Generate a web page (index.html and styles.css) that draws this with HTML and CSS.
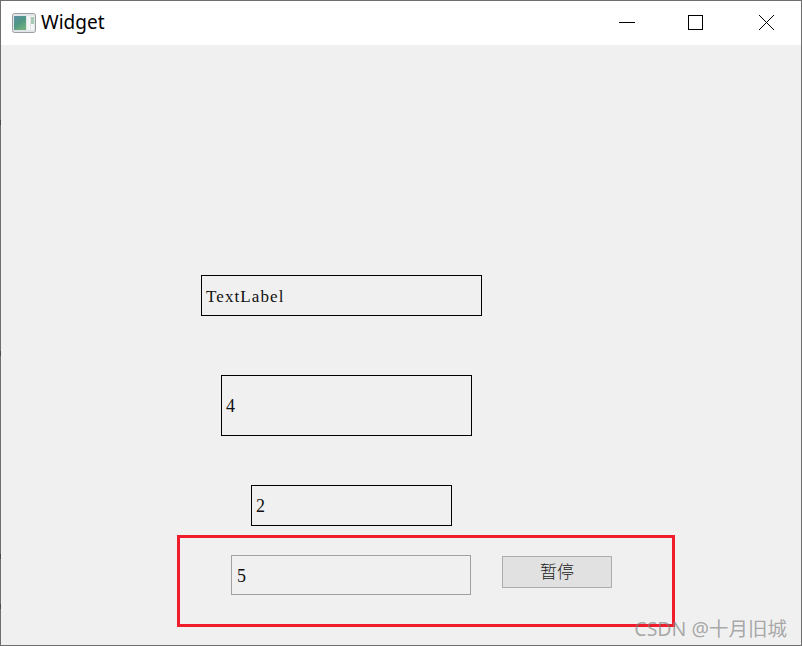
FILE: index.html
```html
<!DOCTYPE html>
<html lang="zh">
<head>
<meta charset="utf-8">
<title>Widget</title>
<link rel="stylesheet" href="styles.css">
</head>
<body>
<div class="window">
  <span class="tick tick-a"></span>
  <span class="tick tick-b"></span>
  <span class="tick tick-c"></span>
  <span class="tick tick-d"></span>
  <header class="titlebar">
    <div class="title-left">
      <svg class="app-icon" width="24" height="20" viewBox="0 0 24 20">
        <defs>
          <linearGradient id="panel" x1="0" y1="0" x2="0.6" y2="1">
            <stop offset="0" stop-color="#5f8fa8"/>
            <stop offset="0.55" stop-color="#4f9784"/>
            <stop offset="1" stop-color="#6fae7e"/>
          </linearGradient>
        </defs>
        <rect x="0.5" y="0.5" width="23" height="19" rx="2" fill="#e3e6e8" stroke="#999ea2"/>
        <rect x="2" y="3" width="12" height="14" fill="url(#panel)"/>
        <rect x="15" y="3" width="3" height="14" fill="#f4f6f5"/>
        <rect x="19" y="3" width="3" height="14" fill="#f4f6f5"/>
        <rect x="19" y="4" width="3" height="7" fill="#a9cbb4"/>
      </svg>
      <span class="title-text">Widget</span>
    </div>
    <div class="controls">
      <svg class="ctl" width="70" height="44" viewBox="0 0 70 44"><path d="M27 21.5H43" stroke="#000" fill="none"/></svg>
      <svg class="ctl" width="70" height="44" viewBox="0 0 70 44"><rect x="26.5" y="14.5" width="14" height="14" stroke="#000" fill="none"/></svg>
      <svg class="ctl" width="69" height="44" viewBox="0 0 69 44"><path d="M27 14L42 29M42 14L27 29" stroke="#000" fill="none"/></svg>
    </div>
  </header>
  <main class="content">
    <div class="box box-label"><span class="label-text">TextLabel</span></div>
    <div class="box box-four">4</div>
    <div class="box box-two">2</div>
    <section class="highlight">
      <div class="field">5</div>
      <button class="pause" type="button">暂停</button>
    </section>
    <div class="watermark">CSDN @十月旧城</div>
  </main>
</div>
</body>
</html>
```
FILE: styles.css
```css
* { box-sizing: border-box; }
html, body { margin: 0; padding: 0; }
body { width: 802px; height: 646px; overflow: hidden; background: #f0f0f0; }
.window {
  width: 802px; height: 646px;
  border: 1px solid #6e6e6e;
  display: flex; flex-direction: column;
  position: relative;
}
.tick { position: absolute; left: -1px; width: 2px; height: 5px; background: #4a4a4a; }
.tick-a { top: 119px; }
.tick-b { top: 350px; }
.tick-c { top: 553px; }
.tick-d { top: 603px; }
.titlebar {
  height: 44px; flex: none; background: #fff;
  display: flex; justify-content: space-between; align-items: center;
}
.title-left { display: flex; align-items: center; padding-left: 11px; gap: 5px; }
.app-icon { display: block; }
.title-text { font: 19px/24px "Noto Sans", "Open Sans", sans-serif; color: #000; padding-bottom: 2px; }
.controls { display: flex; }
.ctl { display: block; }
.content {
  flex: 1; background: #f0f0f0; position: relative;
  display: flex; flex-direction: column; align-items: flex-start;
  font: 18px "Liberation Serif", "Noto Sans CJK SC", serif; color: #111;
}
.label-text { font-size: 17px; letter-spacing: 1.1px; }
.box {
  border: 1px solid #000;
  display: flex; align-items: center;
  padding-left: 4px;
}
.box-label { width: 281px; height: 41px; margin: 230px 0 0 200px; padding-top: 2px; }
.box-four { width: 251px; height: 61px; margin: 59px 0 0 220px; padding-top: 2px; }
.box-two { width: 201px; height: 41px; margin: 49px 0 0 250px; padding-top: 1px; }
.highlight {
  width: 498px; height: 92px;
  margin: 9px 0 0 176px;
  border: 3px solid #f01c2c;
  padding: 17px 0 0 51px;
  display: flex; align-items: flex-start; gap: 31px;
}
.field {
  width: 240px; height: 40px;
  border: 1px solid #a0a0a0;
  display: flex; align-items: center;
  padding: 3px 0 0 5px;
}
.pause {
  width: 110px; height: 32px; margin-top: 1px;
  background: #e1e1e1; border: 1px solid #adadad; border-radius: 0;
  padding: 0 0 3px;
  font: 300 17px "Noto Sans CJK SC", sans-serif; color: #222;
}
.watermark {
  position: absolute; right: 14px; bottom: 3px;
  font: 19.5px/26px "Noto Sans", "Noto Sans CJK SC", sans-serif;
  color: rgba(125, 125, 125, 0.65);
}
```
